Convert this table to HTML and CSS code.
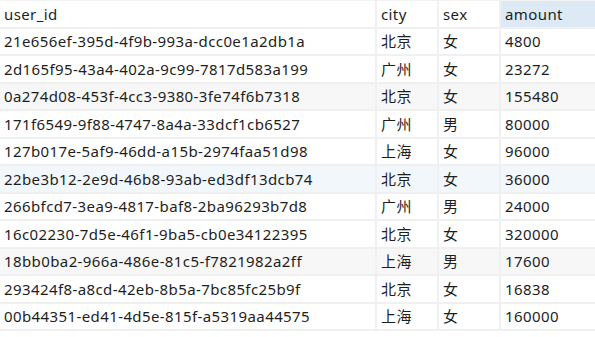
FILE: index.html
```html
<!DOCTYPE html>
<html>
<head>
<meta charset="utf-8">
<link rel="stylesheet" href="styles.css">
</head>
<body>
<table class="grid">
  <colgroup>
    <col class="c-id"><col class="c-city"><col class="c-sex"><col class="c-amt">
  </colgroup>
  <thead>
    <tr class="head"><th>user_id</th><th>city</th><th>sex</th><th class="sel">amount</th></tr>
  </thead>
  <tbody>
    <tr><td>21e656ef-395d-4f9b-993a-dcc0e1a2db1a</td><td>北京</td><td>女</td><td>4800</td></tr>
    <tr><td>2d165f95-43a4-402a-9c99-7817d583a199</td><td>广州</td><td>女</td><td>23272</td></tr>
    <tr class="alt"><td>0a274d08-453f-4cc3-9380-3fe74f6b7318</td><td>北京</td><td>女</td><td>155480</td></tr>
    <tr><td>171f6549-9f88-4747-8a4a-33dcf1cb6527</td><td>广州</td><td>男</td><td>80000</td></tr>
    <tr><td>127b017e-5af9-46dd-a15b-2974faa51d98</td><td>上海</td><td>女</td><td>96000</td></tr>
    <tr class="hover"><td>22be3b12-2e9d-46b8-93ab-ed3df13dcb74</td><td>北京</td><td>女</td><td>36000</td></tr>
    <tr><td>266bfcd7-3ea9-4817-baf8-2ba96293b7d8</td><td>广州</td><td>男</td><td>24000</td></tr>
    <tr><td>16c02230-7d5e-46f1-9ba5-cb0e34122395</td><td>北京</td><td>女</td><td>320000</td></tr>
    <tr class="alt"><td>18bb0ba2-966a-486e-81c5-f7821982a2ff</td><td>上海</td><td>男</td><td>17600</td></tr>
    <tr><td>293424f8-a8cd-42eb-8b5a-7bc85fc25b9f</td><td>北京</td><td>女</td><td>16838</td></tr>
    <tr><td>00b44351-ed41-4d5e-815f-a5319aa44575</td><td>上海</td><td>女</td><td>160000</td></tr>
  </tbody>
</table>
</body>
</html>
```
FILE: styles.css
```css
html, body {
  margin: 0;
  padding: 0;
  background: #ffffff;
}
.grid {
  width: 595px;
  border-collapse: collapse;
  table-layout: fixed;
  font-family: "Noto Sans", "Noto Sans CJK SC", sans-serif;
  font-size: 15px;
  letter-spacing: 0.4px;
  color: #1e1e1e;
  border-top: 1px solid #f3f3f3;
}
.c-id { width: 376px; }
.c-city { width: 62px; }
.c-sex { width: 62px; }
.c-amt { width: 95px; }
.grid th, .grid td {
  height: 25.5px;
  padding: 0 0 0 4px;
  text-align: left;
  font-weight: normal;
  white-space: nowrap;
  overflow: hidden;
  border-bottom: 2px solid #f0f0f0;
  border-right: 2px solid #f0f0f0;
  vertical-align: middle;
  line-height: 18px;
}
.grid th:last-child, .grid td:last-child {
  border-right: none;
}
.head th {
  background: #ffffff;
}
.head th.sel {
  background: #dde9f5;
}
tr.alt td {
  background: #f7f7f7;
}
tr.hover td {
  background: #f2f7fc;
}
```
